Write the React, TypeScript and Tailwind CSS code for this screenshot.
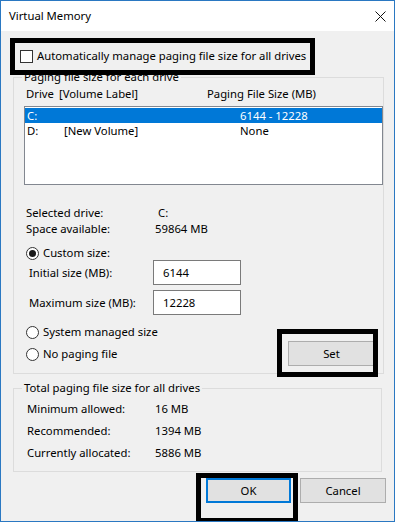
import React from "react";

const font = { fontFamily: '"Noto Sans", "Open Sans", sans-serif' };

function Radio({ checked }: { checked?: boolean }) {
  return (
    <span className="w-[13px] h-[13px] rounded-full border border-[#333333] bg-white flex items-center justify-center shrink-0">
      {checked && <span className="w-[7px] h-[7px] rounded-full bg-[#1a1a1a]" />}
    </span>
  );
}

export default function App() {
  return (
    <div
      className="relative w-[395px] h-[522px] border border-[#2a78c2] bg-[#f0f0f0] text-[11.3px] leading-[16px] text-black font-normal overflow-hidden"
      style={font}
    >
      {/* Title bar */}
      <div className="h-[30px] bg-white flex items-center justify-between pl-[8px] pr-[8px]">
        <span>Virtual Memory</span>
        <svg width="11" height="11" viewBox="0 0 11 11" className="shrink-0">
          <path d="M0.5 0.5 L10.5 10.5 M10.5 0.5 L0.5 10.5" stroke="#111" strokeWidth="1" fill="none" />
        </svg>
      </div>

      {/* Auto manage checkbox */}
      <div className="mt-[17px] ml-[19px] flex items-center h-[16px]">
        <span className="w-[13px] h-[13px] border border-[#333333] bg-white shrink-0" />
        <span className="ml-[4px]">Automatically manage paging file size for all drives</span>
      </div>

      {/* Group 1 */}
      <fieldset className="mt-[5px] ml-[12px] w-[369px] border border-[#dcdcdc] pb-[7px]">
        <legend className="ml-[8px] px-[2px] leading-[16px]">Paging file size for each drive</legend>
        <div className="mt-[1px] flex h-[16px]">
          <span className="ml-[12px] w-[33px]">Drive</span>
          <span className="w-[148px]">[Volume Label]</span>
          <span>Paging File Size (MB)</span>
        </div>
        <div className="mt-[4px] ml-[10px] w-[359px] h-[79px] border border-[#828790] bg-white pt-[1px]">
          <div className="h-[15px] bg-[#0078d7] text-white flex items-center leading-[14px]">
            <span className="pl-[2px] w-[215px]">C:</span>
            <span>6144 - 12228</span>
          </div>
          <div className="h-[15px] flex items-center leading-[14px]">
            <span className="pl-[2px] w-[39px]">D:</span>
            <span className="w-[176px]">[New Volume]</span>
            <span>None</span>
          </div>
        </div>

        <div className="mt-[20px] ml-[12px] flex h-[16px]">
          <span className="w-[129px]">Selected drive:</span>
          <span className="ml-[3px]">C:</span>
        </div>
        <div className="ml-[12px] flex h-[16px]">
          <span className="w-[129px]">Space available:</span>
          <span>59864 MB</span>
        </div>

        <div className="mt-[9px] ml-[12px] flex items-center h-[14px]">
          <Radio checked />
          <span className="ml-[4px]">Custom size:</span>
        </div>
        <div className="ml-[15px] flex items-center h-[25px]">
          <span className="w-[124px]">Initial size (MB):</span>
          <span className="w-[88px] h-[25px] border border-[#7a7a7a] bg-white pl-[9px] flex items-center">6144</span>
        </div>
        <div className="mt-[5px] ml-[15px] flex items-center h-[25px]">
          <span className="w-[124px]">Maximum size (MB):</span>
          <span className="w-[88px] h-[25px] border border-[#7a7a7a] bg-white pl-[9px] flex items-center">12228</span>
        </div>

        <div className="mt-[9px] flex justify-between">
          <div className="ml-[12px] flex flex-col">
            <div className="flex items-center h-[16px]">
              <Radio />
              <span className="ml-[4px]">System managed size</span>
            </div>
            <div className="mt-[6px] flex items-center h-[16px]">
              <Radio />
              <span className="ml-[4px]">No paging file</span>
            </div>
          </div>
          <button className="mt-[17px] mr-[8px] w-[87px] h-[25px] bg-[#e1e1e1] border border-[#adadad] flex items-center justify-center font-normal">
            Set
          </button>
        </div>
      </fieldset>

      {/* Group 2 */}
      <fieldset className="mt-[6px] ml-[12px] w-[369px] border border-[#dcdcdc] pb-[10px]">
        <legend className="ml-[8px] px-[2px] leading-[16px]">Total paging file size for all drives</legend>
        <div className="mt-[5px] ml-[13px] flex flex-col gap-[6px]">
          <div className="flex h-[16px]">
            <span className="w-[128px]">Minimum allowed:</span>
            <span>16 MB</span>
          </div>
          <div className="flex h-[16px]">
            <span className="w-[128px]">Recommended:</span>
            <span>1394 MB</span>
          </div>
          <div className="flex h-[16px]">
            <span className="w-[128px]">Currently allocated:</span>
            <span>5886 MB</span>
          </div>
        </div>
      </fieldset>

      {/* Buttons */}
      <div className="mt-[6px] pr-[8px] flex justify-end gap-[9px]">
        <button className="w-[85px] h-[25px] bg-[#e1e1e1] border-2 border-[#0078d7] flex items-center justify-center font-normal">
          OK
        </button>
        <button className="w-[86px] h-[25px] bg-[#e1e1e1] border border-[#adadad] flex items-center justify-center font-normal">
          Cancel
        </button>
      </div>

      {/* Annotation boxes */}
      <div className="absolute left-[9px] top-[37px] w-[305px] h-[37px] border-[5px] border-black" />
      <div className="absolute left-[276px] top-[328px] w-[101px] h-[48px] border-[5px] border-black" />
      <div className="absolute left-[195px] top-[472px] w-[102px] h-[50px] border-[5px] border-black" />
    </div>
  );
}
